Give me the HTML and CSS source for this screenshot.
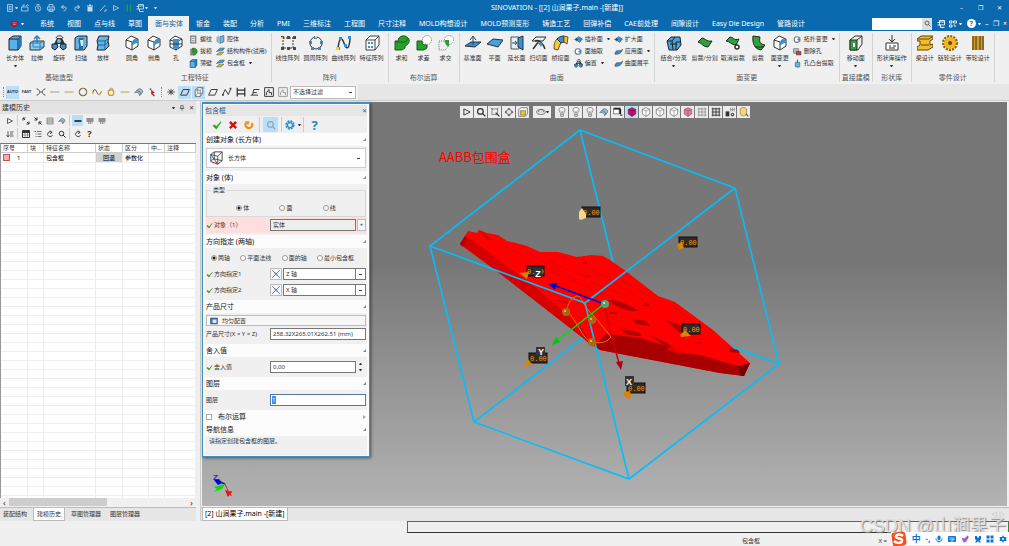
FILE: index.html
```html
<!DOCTYPE html>
<html lang="zh-CN">
<head>
    <meta charset="UTF-8">
    <meta name="viewport" content="width=device-width, initial-scale=1.0">
    <title>SINOVATION</title>
    <link rel="stylesheet" href="styles.css">
</head>
<body>
<svg class="sprite" aria-hidden="true">
    <!-- solids -->
    <symbol id="cube" viewBox="0 0 16 16"><path d="M2 4 6 1h8v10l-3 4H2z" fill="#5bb2ea" stroke="#222"/><path d="M2 4h9v11M11 4l3-3" fill="none" stroke="#222"/><path d="M11 4l3-3v10l-3 4z" fill="#2577b8"/></symbol>
    <symbol id="extrude" viewBox="0 0 16 16"><path d="M1 8l3-2h11v6l-4 3H1z" fill="#8ccdf2" stroke="#333"/><path d="M1 8h10v7M11 8l4-2M4 6v6h11" fill="none" stroke="#2f7fb8"/><path d="M8 8V2M5 4l3-3 3 3" fill="none" stroke="#2f7fb8" stroke-width="1.5"/></symbol>
    <symbol id="revolve" viewBox="0 0 16 16"><path d="M6 3h5l3 6H3z" fill="#333"/><path d="M1 9h5l1 3-3 3-3-2zM10 9h5v4l-3 2-3-3z" fill="#398fd0" stroke="#222"/><path d="M5 3c1-3 6-3 7 0" fill="none" stroke="#222"/><circle cx="8" cy="6" r="2" fill="#6bbcf0"/></symbol>
    <symbol id="sweep" viewBox="0 0 16 16"><path d="M2 3l3-2h9v10l-3 4H2z" fill="#64b5e9" stroke="#222"/><path d="M6 3c-2 4 2 7-1 12h4c3-5-1-8 2-12z" fill="#1f6ca8"/><path d="M7 5h3v6H8z" fill="#d8eefa"/></symbol>
    <symbol id="loft" viewBox="0 0 16 16"><path d="M4 1h10l-1 5 1 5-4 4H2l1-5-1-4z" fill="#64b5e9" stroke="#222"/><path d="M2 6h8l3-2M3 10h7l3-3M10 6v9" fill="none" stroke="#1f5f96"/></symbol>
    <symbol id="wire" viewBox="0 0 16 16"><path d="M2 5l4-4h8v9l-4 5H2z" fill="#fff" stroke="#333"/><path d="M2 5h8v10M10 5l4-4M6 1v9l-4 5M6 10h8" fill="none" stroke="#555"/></symbol>
    <symbol id="shapebox" viewBox="0 0 16 16"><path d="M2 4l4-3h9v10l-5 4z" fill="#fff" stroke="#333"/><path d="M2 4l8 2v9M10 6l5-5M6 1v8l-4 2M6 9l9 2" fill="none" stroke="#444"/><path d="M2 4v8" stroke="#2a8fd8" stroke-width="1.500"/><path d="M2 12l8 3" stroke="#d33" stroke-width="1.500"/></symbol>
    <symbol id="fillet" viewBox="0 0 16 16"><path d="M2 5l5-4 7 3v7l-6 4-6-3z" fill="#fff" stroke="#333"/><path d="M2 5l6 2v8" fill="none" stroke="#333"/><path d="M8 7c1-2 2-4 6-3v4c-3 0-4 1-6 3z" fill="#398fd0"/></symbol>
    <symbol id="hole" viewBox="0 0 16 16"><path d="M2 5l5-4 7 3v7l-6 4-6-3z" fill="#fff" stroke="#333"/><path d="M2 5l6 2 6-3M8 7v8" fill="none" stroke="#333"/><path d="M5 4h6v9l-3 1-3-1z" fill="#398fd0"/><path d="M2 9h12" stroke="#333"/></symbol>
    <symbol id="join" viewBox="0 0 16 16"><path d="M1 6l4-4h9l1 8-4 5H3z" fill="#4aa0dd" stroke="#222"/><path d="M1 6h5l1 9M6 6l3-4M10 7h5M10 7v8M4 9h7" fill="none" stroke="#222"/></symbol>
    <!-- arrays -->
    <symbol id="linear" viewBox="0 0 16 16"><path d="M3 3h10v10H3z" fill="none" stroke="#333" stroke-dasharray="2 1"/><path d="M1 1h3v3H1zM7 1h3v3H7zM13 1h3v3h-3zM1 12h3v3H1zM7 12h3v3H7zM13 12h3v3h-3z" fill="#4b4b4b"/><path d="M1 2h2v2H1z" fill="#fc3"/></symbol>
    <symbol id="circular" viewBox="0 0 16 16"><circle cx="8" cy="8" r="6" fill="none" stroke="#333"/><path d="M6 1h3v3H6zM1 6h3v3H1zM12 6h3v3h-3zM3 12h3v3H3zM10 12h3v3h-3z" fill="#4a86b0"/><path d="M7 1h2v2H7z" fill="#fc3"/></symbol>
    <symbol id="curvearr" viewBox="0 0 16 16"><path d="M2 14C3 2 6 2 8 8s5 8 6-4" fill="none" stroke="#333" stroke-width="1.5"/><path d="M1 12h3v3H1zM3 2h3v3H3zM12 1h3v3h-3zM8 9h3v3H8z" fill="#398fd0"/><path d="M0 12h3v3H0z" fill="#fc3"/></symbol>
    <symbol id="featarr" viewBox="0 0 16 16"><path d="M2 5l4-4h9v9l-4 5H2z" fill="#fafafa" stroke="#444"/><path d="M2 5h9v10M11 5l4-4" fill="none" stroke="#444"/><path d="M4 7h2v2H4zM7 7h2v2H7zM4 11h2v2H4zM7 11h2v2H7z" fill="#398fd0"/></symbol>
    <!-- boolean -->
    <symbol id="union" viewBox="0 0 16 16"><path d="M1 6h3c0-5 7-7 10-3 3 3 0 7-3 8v2l-3 2H1z" fill="#27a02e" stroke="#165c1c"/><path d="M2 7h6c3 1 5-1 5-3" fill="none" stroke="#165c1c"/></symbol>
    <symbol id="subtract" viewBox="0 0 16 16"><circle cx="11" cy="5" r="4.500" fill="#fff" stroke="#777" stroke-dasharray="1 1"/><path d="M1 6h5c0 4 2 4 5 4v3l-3 2H1z" fill="#27a02e" stroke="#165c1c"/></symbol>
    <symbol id="intersect" viewBox="0 0 16 16"><path d="M1 6h9v6l-3 3H1z" fill="none" stroke="#777" stroke-dasharray="1 1"/><circle cx="11" cy="5" r="4.500" fill="#fff" stroke="#777" stroke-dasharray="1 1"/><path d="M7 5h4v6c-3 0-4-2-4-6z" fill="#27a02e"/></symbol>
    <!-- surfaces -->
    <symbol id="datum" viewBox="0 0 16 16"><path d="M0 11l6-4h10l-6 5z" fill="#398fd0" stroke="#234"/><path d="M8 10V2M5 5l3-4 3 4" fill="none" stroke="#345"/></symbol>
    <symbol id="plane" viewBox="0 0 16 16"><path d="M0 9l6-5 10 1-5 7z" fill="#4aa0dd" stroke="#234"/></symbol>
    <symbol id="extend" viewBox="0 0 16 16"><path d="M2 2h8v12H2z" fill="#e9eef2" stroke="#555"/><path d="M9 3l5-2v14l-5-3z" fill="#398fd0" stroke="#234"/><path d="M3 8h5M6 6l2 2-2 2" fill="none" stroke="#345"/></symbol>
    <symbol id="sweepcut" viewBox="0 0 16 16"><path d="M1 6l4-4h10l-3 4z" fill="#eee" stroke="#333"/><path d="M4 6c4-2 8 2 10 8M2 14l6-8" fill="none" stroke="#333" stroke-width="1.500"/><path d="M6 7l6 1-2 4z" fill="#398fd0"/></symbol>
    <symbol id="bridge" viewBox="0 0 16 16"><path d="M1 14c0-6 1-8 3-10l4 3-3 8z" fill="#f6c93c" stroke="#6d5512"/><path d="M4 4c2-2 4-3 7-3l0 6-3 1z" fill="#398fd0" stroke="#234"/><path d="M11 1l4 1-1 7-3-2z" fill="#f6c93c" stroke="#6d5512"/></symbol>
    <symbol id="green" viewBox="0 0 16 16"><path d="M1 7l4-4c3 0 4 4 10 3l-4 6c-5 0-6-4-10-5z" fill="#2da43a" stroke="#222"/></symbol>
    <symbol id="greenx" viewBox="0 0 16 16"><path d="M1 6l4-4c3 0 4 4 9 2l-3 6c-5 0-6-4-10-4z" fill="#2da43a" stroke="#222"/><circle cx="12" cy="12" r="2" fill="#fff" stroke="#333" stroke-width="1.500"/></symbol>
    <symbol id="greenl" viewBox="0 0 16 16"><path d="M3 1l7 1c-1 5 0 7 5 8l-4 5C5 14 2 9 3 1z" fill="#2da43a" stroke="#222"/><path d="M5 12h9" stroke="#222"/></symbol>
    <symbol id="move" viewBox="0 0 16 16"><path d="M2 5l5-4h7v8l-4 6H2z" fill="#eee" stroke="#333"/><path d="M2 5h7v10H2z" fill="#2da43a" stroke="#333"/><path d="M9 5l5-4" stroke="#333"/><path d="M5 8h2v4H5z" fill="#fff"/></symbol>
    <symbol id="lib" viewBox="0 0 16 16"><path d="M2 8h12v7H2z" fill="#fff" stroke="#333"/><path d="M8 0v6M5 4l3 3 3-3M5 11h2M9 11h3M5 13h6" fill="none" stroke="#333"/></symbol>
    <symbol id="beam" viewBox="0 0 16 16"><path d="M0 4l4-3h12v3l-3 2v4l3-1v3l-5 3H0v-3l3-2V6H0z" fill="#f1bd2b" stroke="#5c470c"/><path d="M1 4h11l3-2M4 10h8" fill="none" stroke="#5c470c"/></symbol>
    <symbol id="gear" viewBox="0 0 16 16"><circle cx="8" cy="8" r="6.500" fill="none" stroke="#8a6508" stroke-width="3" stroke-dasharray="2 1"/><circle cx="8" cy="8" r="6" fill="#f3b71d"/><circle cx="8" cy="8" r="2" fill="#5c470c"/></symbol>
    <symbol id="belt" viewBox="0 0 16 16"><path d="M2 1h12v14H2z" fill="#c99b32"/><path d="M3 1v14M6 1v14M10 1v14M13 1v14" stroke="#4e3b0b"/></symbol>
    <!-- small tools -->
    <symbol id="mini-a" viewBox="0 0 16 16"><path d="M3 2h9v12H3z" fill="#dfe5ea" stroke="#777" stroke-width="2"/><path d="M5 6h5M5 10h5" stroke="#666"/></symbol>
    <symbol id="mini-b" viewBox="0 0 16 16"><path d="M1 4l4-3v14l-4-3z" fill="#9ab"/><path d="M7 3l7-2v11l-7 3z" fill="#74b9e8" stroke="#246"/></symbol>
    <symbol id="mini-c" viewBox="0 0 16 16"><path d="M2 3h5v12H2z" fill="#888"/><path d="M6 2c10-1 12 10 2 13z" fill="#27a02e" stroke="#165c1c"/></symbol>
    <symbol id="mini-d" viewBox="0 0 16 16"><path d="M1 8l6-6h8l-3 4H8z" fill="#4aa0dd" stroke="#246"/><path d="M1 14l5-5h8l-5 5z" fill="#d9b640" stroke="#465"/></symbol>
    <symbol id="mini-e" viewBox="0 0 16 16"><path d="M3 8l5-5 7 4-5 6z" fill="#398fd0" stroke="#234"/><path d="M1 8h6M4 5v6" stroke="#24557e" stroke-width="2"/></symbol>
    <symbol id="mini-f" viewBox="0 0 16 16"><path d="M2 10c3-7 9 0 13-6-1 6-5 9-13 9z" fill="#398fd0" stroke="#234"/></symbol>
    <symbol id="mini-g" viewBox="0 0 16 16"><circle cx="7" cy="8" r="5" fill="#fff" stroke="#778" stroke-width="2"/><path d="M7 8l6-4v8z" fill="#398fd0"/></symbol>
    <symbol id="mini-h" viewBox="0 0 16 16"><path d="M1 3h9v8H1z" fill="#bbb" stroke="#555"/><path d="M6 8h8v6H6z" fill="#b44" stroke="#422"/></symbol>
    <symbol id="mini-i" viewBox="0 0 16 16"><path d="M8 1v14" stroke="#555" stroke-width="2"/><path d="M4 6h8v8H4z" fill="#6bb3e4" stroke="#357"/></symbol>
    <!-- sketch tools -->
    <symbol id="axisx" viewBox="0 0 16 16"><path d="M1 3c4 0 5 5 5 5s-1 5-5 5M15 3c-4 0-5 5-5 5s1 5 5 5M6 8h4" fill="none" stroke="#444" stroke-width="1.500"/></symbol>
    <symbol id="line1" viewBox="0 0 16 16"><path d="M1 8h14" stroke="#999" stroke-width="1.500"/><path d="M1 7h2v2H1z" fill="#f5b921"/></symbol>
    <symbol id="line2" viewBox="0 0 16 16"><path d="M1 8h14" stroke="#999" stroke-width="1.500"/><path d="M7 7h3v3H7z" fill="#f5c842"/></symbol>
    <symbol id="level" viewBox="0 0 16 16"><path d="M1 6h14v4H1z" fill="#345"/></symbol>
    <symbol id="circ" viewBox="0 0 16 16"><circle cx="8" cy="8" r="6" fill="none" stroke="#333" stroke-width="1.500"/><path d="M7 1h2v2H7zM7 13h2v2H7zM1 7h2v2H1zM13 7h2v2h-2z" fill="#f5b921"/></symbol>
    <symbol id="wave" viewBox="0 0 16 16"><path d="M1 9c3-9 6-3 7 0s5 5 7-2" fill="none" stroke="#444" stroke-width="1.500"/><path d="M0 8h3v3H0zM11 10h3v3h-3z" fill="#f5b921"/></symbol>
    <symbol id="tri" viewBox="0 0 16 16"><circle cx="8" cy="9" r="4.500" fill="none" stroke="#d39b17" stroke-width="2"/><path d="M5 6l2-4h3l2 4" fill="none" stroke="#777"/></symbol>
    <symbol id="surf" viewBox="0 0 16 16"><path d="M1 9l6-6c4-1 7 2 7 5l-5 6c0-4-3-6-8-5z" fill="#9dbfcf" stroke="#555"/><path d="M4 6c5 0 7 3 7 6" fill="none" stroke="#555"/></symbol>
    <symbol id="pick" viewBox="0 0 16 16"><path d="M5 4l6 5-3 1 3 4-2 1-3-4-1 2z" fill="#c22"/><path d="M3 2h2v3H3z" fill="#555"/></symbol>
    <symbol id="star" viewBox="0 0 16 16"><path d="M2 8h12M4 4l8 8M12 4l-8 8M8 3v10" stroke="#444" stroke-width="1.500"/></symbol>
    <symbol id="para" viewBox="0 0 16 16"><path d="M1 13l4-9h10l-4 9z" fill="none" stroke="#333" stroke-width="1.500"/></symbol>
    <symbol id="base" viewBox="0 0 16 16"><path d="M15 4H6l-2 9H1M4 13h9M5 9h6" fill="none" stroke="#333" stroke-width="1.500"/></symbol>
    <symbol id="poly" viewBox="0 0 16 16"><path d="M1 13l4-9 5 8 4-9" fill="none" stroke="#333" stroke-width="1.500"/><path d="M0 11h3v3H0zM12 1h3v3h-3z" fill="#444"/></symbol>
    <symbol id="dim" viewBox="0 0 16 16"><path d="M2 1v14M14 1v14M2 5h12M2 11h12" stroke="#333" stroke-width="2" fill="none"/></symbol>
    <symbol id="frame" viewBox="0 0 16 16"><path d="M1 1h14v14H1zM4 13V9l4-5v5h4v4" fill="none" stroke="currentColor" stroke-width="1.500"/></symbol>
    <!-- history panel -->
    <symbol id="play" viewBox="0 0 16 16"><path d="M3 3l10 5-10 5z" fill="none" stroke="#333" stroke-width="1.500"/></symbol>
    <symbol id="expand" viewBox="0 0 16 16"><path d="M2 7V2h5M2 2l4 4M14 9v5H9M14 14l-4-4" fill="none" stroke="#333" stroke-width="2"/></symbol>
    <symbol id="collapse" viewBox="0 0 16 16"><path d="M6 1v5H1M6 6L1 1M10 15v-5h5M10 10l5 5" fill="none" stroke="#333" stroke-width="2"/></symbol>
    <symbol id="list" viewBox="0 0 16 16"><path d="M2 2h12v12H2zM2 6h12M2 10h12" fill="#ddd" stroke="#777" stroke-width="1.500"/></symbol>
    <symbol id="bars" viewBox="0 0 16 16"><path d="M1 4h14M1 8h14" stroke="#333" stroke-width="2"/><path d="M4 12h9" stroke="#555" stroke-width="2" stroke-dasharray="3 1"/></symbol>
    <symbol id="sort" viewBox="0 0 16 16"><path d="M4 2v11M1 10l3 4 3-4M8 4h7M8 8h6M8 12h7" fill="none" stroke="#333" stroke-width="1.500"/></symbol>
    <symbol id="grid" viewBox="0 0 16 16"><path d="M1 1h14v14H1z" fill="#fff" stroke="#333" stroke-width="2"/><path d="M1 4h14" stroke="#333" stroke-width="4"/><path d="M6 4v11M11 4v11M1 10h14" stroke="#333"/></symbol>
    <symbol id="tree" viewBox="0 0 16 16"><path d="M1 3h3M6 3h9M3 8h2M7 8h8M3 13h2M7 13h8" stroke="#444" stroke-width="1.500"/></symbol>
    <symbol id="refresh" viewBox="0 0 16 16"><path d="M12 5a5 5 0 1 0 1 5M8 1l4 4-4 2" fill="none" stroke="#333" stroke-width="1.800"/></symbol>
    <symbol id="search" viewBox="0 0 16 16"><circle cx="7" cy="7" r="4.500" fill="none" stroke="currentColor" stroke-width="2"/><path d="M10 10l5 5" stroke="currentColor" stroke-width="2"/></symbol>
    <!-- title bar -->
    <symbol id="doc" viewBox="0 0 16 16"><path d="M3 1h10v14H3zM5 5h6M5 8h6M5 11h6" fill="none" stroke="currentColor" stroke-width="1.500"/></symbol>
    <symbol id="open" viewBox="0 0 16 16"><path d="M1 6h13v8H1zM4 6V2h4M10 4l3-3 2 3" fill="none" stroke="currentColor" stroke-width="1.500"/></symbol>
    <symbol id="save" viewBox="0 0 16 16"><circle cx="8" cy="9" r="5.500" fill="none" stroke="currentColor" stroke-width="1.500"/><path d="M5 1h6M8 5v5h3" fill="none" stroke="currentColor" stroke-width="1.500"/></symbol>
    <symbol id="print" viewBox="0 0 16 16"><path d="M4 6V1h8v5M1 6h14v6H1zM4 10h8v5H4z" fill="none" stroke="currentColor" stroke-width="1.500"/></symbol>
    <symbol id="undo" viewBox="0 0 16 16"><path d="M7 2L3 6l4 4M3 6h7c4 1 3 7-3 8" fill="none" stroke="currentColor" stroke-width="1.800"/></symbol>
    <symbol id="redo" viewBox="0 0 16 16"><path d="M9 2l4 4-4 4M13 6H6c-4 1-3 7 3 8" fill="none" stroke="currentColor" stroke-width="1.800"/></symbol>
    <symbol id="trash" viewBox="0 0 16 16"><path d="M2 3h12v2H2zM6 1h4v2H6zM3 6h10v9H3z" fill="currentColor"/></symbol>
    <symbol id="pen" viewBox="0 0 16 16"><path d="M2 14L13 2M10 14h4v-4" fill="none" stroke="currentColor" stroke-width="1.500"/></symbol>
    <symbol id="arrow" viewBox="0 0 16 16"><path d="M3 3l10 5-10 5z" fill="none" stroke="currentColor" stroke-width="1.500"/></symbol>
    <symbol id="pair" viewBox="0 0 16 16"><path d="M3 1h3v14H3zM10 1h3v14h-3z" fill="#1c9c4c"/></symbol>
    <symbol id="windows" viewBox="0 0 16 16"><path d="M5 1h10v9H5zM1 5h4M1 10h6v5h8M5 4h10" fill="none" stroke="currentColor" stroke-width="1.800"/></symbol>
    <symbol id="layout" viewBox="0 0 16 16"><path d="M1 2h5v4H1zM9 2h6v4H9zM1 10h5v4H1zM9 10h3v4" fill="none" stroke="currentColor" stroke-width="1.800"/></symbol>
    <!-- view bar -->
    <symbol id="fit" viewBox="0 0 16 16"><path d="M3 3h9v9H3zM1 1l4 4M14 1l-3 3" fill="none" stroke="#555"/><path d="M9 9l6 6" stroke="#333" stroke-width="2"/></symbol>
    <symbol id="pan" viewBox="0 0 16 16"><path d="M8 1l3 3H5zM8 15l3-3H5zM1 8l3-3v6zM15 8l-3-3v6z" fill="#555"/><circle cx="8" cy="8" r="4" fill="none" stroke="#555"/></symbol>
    <symbol id="ybox" viewBox="0 0 16 16"><path d="M1 4l4-3h10v10l-3 4H1z" fill="#eee" stroke="#555"/><path d="M4 6h8v7H4z" fill="#efc02b" stroke="#765"/></symbol>
    <symbol id="orbit" viewBox="0 0 16 16"><ellipse cx="8" cy="8" rx="7" ry="4" fill="#ddd" stroke="#555"/><path d="M4 8c0-6 8-6 8 0" fill="none" stroke="#555"/></symbol>
    <symbol id="bulb" viewBox="0 0 16 16"><path d="M8 1c7 0 5 6 2 9v5H6v-5C3 7 1 1 8 1z" fill="#f7f7f7" stroke="#555"/><path d="M6 6l2 4 2-4M6 12h4" fill="none" stroke="#666"/></symbol>
    <symbol id="shade" viewBox="0 0 16 16"><path d="M1 3h9v8H1z" fill="#fff" stroke="#444"/><path d="M1 1h11v3H1zM10 3h3v8h-3z" fill="#222"/><path d="M11 13h4" stroke="#444" stroke-width="2"/></symbol>
    <symbol id="hexm" viewBox="0 0 16 16"><path d="M2 4l6-3 6 3v7l-6 4-6-4z" fill="#c4116d" stroke="#7a0843"/><path d="M2 4l6 2 6-2M8 6v9" fill="none" stroke="#7a0843"/></symbol>
    <symbol id="hexw" viewBox="0 0 16 16"><path d="M2 4l6-3 6 3v7l-6 4-6-4z" fill="#fff" stroke="#555"/><path d="M2 4l6 2 6-2M8 6v9" fill="none" stroke="#777"/></symbol>
    <symbol id="hexp" viewBox="0 0 16 16"><path d="M2 4l6-3 6 3v7l-6 4-6-4z" fill="#dc7fae" stroke="#844"/><path d="M2 4l6 2 6-2M8 6v9" fill="none" stroke="#955"/></symbol>
    <symbol id="mesh" viewBox="0 0 16 16"><path d="M1 3h14M1 8h14M1 13h14M3 1v14M8 1v14M13 1v14" stroke="currentColor" stroke-width="1.500"/></symbol>
    <symbol id="meshset" viewBox="0 0 16 16"><path d="M1 7h6v8H1z" fill="#333"/><path d="M9 1v6M12 1v6M15 1v6M9 4h6" stroke="#777"/><circle cx="12" cy="12" r="2" fill="none" stroke="#555" stroke-width="2"/></symbol>
    <symbol id="cyl" viewBox="0 0 16 16"><path d="M2 3c3-3 8-3 10 0v9c-3 3-7 3-10 0z" fill="#f6d675" stroke="#8a7436"/><path d="M11 11l4 4" stroke="#555" stroke-width="2"/></symbol>
    <!-- dialog -->
    <symbol id="check" viewBox="0 0 16 16"><path d="M1 9l3-2 3 3 7-8 1 1-8 12z" fill="currentColor"/></symbol>
    <symbol id="cross" viewBox="0 0 16 16"><path d="M3 3l10 10M13 3L3 13" stroke="currentColor" stroke-width="4"/></symbol>
    <symbol id="reset" viewBox="0 0 16 16"><path d="M3 4c-2 6 1 9 5 9s7-4 4-8" fill="none" stroke="#f08c1a" stroke-width="3.500"/><path d="M1 2h8L7 8z" fill="#f08c1a"/></symbol>
    <symbol id="cog" viewBox="0 0 16 16"><circle cx="8" cy="8" r="5.500" fill="none" stroke="#2a92d4" stroke-width="4" stroke-dasharray="3 1.300"/><circle cx="8" cy="8" r="4" fill="none" stroke="#2a92d4" stroke-width="2"/></symbol>
    <symbol id="vec" viewBox="0 0 16 16"><path d="M2 14L14 2M2 2l12 12" stroke="#447" stroke-width="1.200"/><path d="M6 6l4 4" stroke="#49d" stroke-width="2"/></symbol>
    <symbol id="disk" viewBox="0 0 16 16"><path d="M1 2h14v12H1z" fill="#3b6cab" stroke="#26466f"/><path d="M5 5h8v7H5z" fill="#dbe8f5"/></symbol>
</svg>

<div class="app">
    <header class="titlebar">
        <div class="quick">
            <button aria-label="新建"><svg><use href="#doc"/></svg><i class="caret"></i></button>
            <button aria-label="打开"><svg><use href="#open"/></svg></button>
            <button aria-label="保存"><svg><use href="#save"/></svg></button>
            <button aria-label="打印"><svg><use href="#print"/></svg></button>
            <button aria-label="撤销"><svg><use href="#undo"/></svg></button>
            <button aria-label="重做"><svg><use href="#redo"/></svg></button>
            <button aria-label="删除"><svg><use href="#trash"/></svg></button>
            <button aria-label="编辑"><svg><use href="#pen"/></svg></button>
            <button aria-label="执行"><svg><use href="#arrow"/></svg></button>
            <button aria-label="暂停"><svg><use href="#pair"/></svg></button>
            <button aria-label="窗口"><svg><use href="#windows"/></svg><i class="caret"></i></button>
            <button aria-label="更多"><i class="caret"></i></button>
        </div>
        <h1>SINOVATION - [[2] 山涧果子.main -[新建]]</h1>
        <div class="winbtns"><button aria-label="最小化">–</button><button aria-label="还原">❐</button><button aria-label="关闭">✕</button></div>
    </header>

    <div class="tabrow">
        <button class="logo" aria-label="菜单"><svg viewBox="0 0 16 12"><path d="M1 1h13l1 4-4 6H5L1 7z" fill="#b5102c"/><path d="M4 4h8M5 7h6" stroke="#f1c7ce"/></svg><i class="caret"></i></button>
        <nav class="tabs">
            <a href="#">系统</a><a href="#">视图</a><a href="#">点与线</a><a href="#">草图</a><a href="#" class="active">面与实体</a><a href="#">钣金</a><a href="#">装配</a><a href="#">分析</a><a href="#">PMI</a><a href="#">三维标注</a><a href="#">工程图</a><a href="#">尺寸注释</a><a href="#">MOLD构想设计</a><a href="#">MOLD预测变形</a><a href="#">铸造工艺</a><a href="#">回弹补偿</a><a href="#">CAE前处理</a><a href="#">间隙设计</a><a href="#">Easy Die Design</a><a href="#">管路设计</a>
        </nav>
        <form class="find"><input type="text" aria-label="搜索"><button type="button" aria-label="查找"><svg><use href="#search"/></svg></button></form>
        <div class="helpers">
            <button aria-label="窗口"><svg><use href="#windows"/></svg></button>
            <button aria-label="布局"><svg><use href="#layout"/></svg><i class="caret"></i></button>
            <button aria-label="帮助"><b class="round">?</b><i class="caret"></i></button>
            <button aria-label="最小化文档">–</button><button aria-label="还原文档">❐</button><button aria-label="关闭文档">×</button>
        </div>
    </div>

    <div class="ribbon">
        <section class="group first">
            <div class="tools">
                <button class="big"><svg><use href="#cube"/></svg>长方体<i class="caret"></i></button>
                <button class="big"><svg><use href="#extrude"/></svg>拉伸</button>
                <button class="big"><svg><use href="#revolve"/></svg>旋转</button>
                <button class="big"><svg><use href="#sweep"/></svg>扫描</button>
                <button class="big"><svg><use href="#loft"/></svg>放样</button>
            </div>
            <h2>基础造型</h2>
        </section>
        <section class="group">
            <div class="tools">
                <button class="big"><svg><use href="#fillet"/></svg>圆角</button>
                <button class="big"><svg><use href="#fillet"/></svg>倒角</button>
                <button class="big"><svg><use href="#hole"/></svg>孔</button>
                <div class="stack">
                    <button><svg><use href="#mini-a"/></svg>螺纹</button>
                    <button><svg><use href="#mini-c"/></svg>拔模</button>
                    <button><svg><use href="#cube"/></svg>薄壁</button>
                </div>
                <div class="stack">
                    <button><svg><use href="#mini-b"/></svg>腔体</button>
                    <button><svg><use href="#mini-d"/></svg>结构构件(试用)</button>
                    <button><svg><use href="#mini-d"/></svg>包含框<i class="caret"></i></button>
                </div>
            </div>
            <h2>工程特征</h2>
        </section>
        <section class="group">
            <div class="tools">
                <button class="big wide"><svg><use href="#linear"/></svg>线性阵列</button>
                <button class="big wide"><svg><use href="#circular"/></svg>圆周阵列</button>
                <button class="big wide"><svg><use href="#curvearr"/></svg>曲线阵列</button>
                <button class="big wide"><svg><use href="#featarr"/></svg>特征阵列</button>
            </div>
            <h2>阵列</h2>
        </section>
        <section class="group">
            <div class="tools">
                <button class="big"><svg><use href="#union"/></svg>求和</button>
                <button class="big"><svg><use href="#subtract"/></svg>求差</button>
                <button class="big"><svg><use href="#intersect"/></svg>求交</button>
            </div>
            <h2>布尔运算</h2>
        </section>
        <section class="group">
            <div class="tools">
                <button class="big"><svg><use href="#datum"/></svg>基准面</button>
                <button class="big"><svg><use href="#plane"/></svg>平面</button>
                <button class="big"><svg><use href="#extend"/></svg>延长面</button>
                <button class="big"><svg><use href="#sweepcut"/></svg>扫切面</button>
                <button class="big"><svg><use href="#bridge"/></svg>桥接面</button>
                <div class="stack">
                    <button><svg><use href="#mini-e"/></svg>插补面<i class="caret"></i></button>
                    <button><svg><use href="#mini-g"/></svg>面抽取</button>
                    <button><svg><use href="#revolve"/></svg>偏置<i class="caret"></i></button>
                </div>
                <div class="stack">
                    <button><svg><use href="#mini-e"/></svg>扩大面</button>
                    <button><svg><use href="#mini-f"/></svg>应用面<i class="caret"></i></button>
                    <button><svg><use href="#mini-f"/></svg>曲面展平</button>
                </div>
            </div>
            <h2>曲面</h2>
        </section>
        <section class="group">
            <div class="tools">
                <button class="big widest"><svg><use href="#join"/></svg>结合/分离<i class="caret"></i></button>
                <button class="big wide"><svg><use href="#green"/></svg>剪裁/分割</button>
                <button class="big wide"><svg><use href="#greenx"/></svg>取消剪裁</button>
                <button class="big"><svg><use href="#greenl"/></svg>剪裁</button>
                <button class="big"><svg><use href="#fillet"/></svg>面变更<i class="caret"></i></button>
                <div class="stack">
                    <button><svg><use href="#mini-g"/></svg>拓扑变更<i class="caret"></i></button>
                    <button><svg><use href="#mini-h"/></svg>删除孔</button>
                    <button><svg><use href="#mini-i"/></svg>孔凸台提取</button>
                </div>
            </div>
            <h2>面变更</h2>
        </section>
        <section class="group">
            <div class="tools"><button class="big wide"><svg><use href="#move"/></svg>移动面<i class="caret"></i></button></div>
            <h2>直接建模</h2>
        </section>
        <section class="group">
            <div class="tools"><button class="big widest"><svg><use href="#lib"/></svg>形状库操作<i class="caret"></i></button></div>
            <h2>形状库</h2>
        </section>
        <section class="group">
            <div class="tools">
                <button class="big"><svg><use href="#beam"/></svg>梁设计</button>
                <button class="big wide"><svg><use href="#gear"/></svg>链轮设计</button>
                <button class="big wide"><svg><use href="#belt"/></svg>带轮设计</button>
            </div>
            <h2>零件设计</h2>
        </section>
    </div>

    <div class="snapbar">
        <div class="snaps">
            <i class="grip"></i>
            <button class="on mode">AUTO</button><button class="mode">FAST</button>
            <button aria-label="交点"><svg><use href="#axisx"/></svg></button>
            <button aria-label="端点"><svg><use href="#line1"/></svg></button>
            <button aria-label="中点"><svg><use href="#line2"/></svg></button>
            <button aria-label="圆心"><svg><use href="#circ"/></svg></button>
            <button aria-label="曲线点"><svg><use href="#wave"/></svg></button>
            <button aria-label="切点"><svg><use href="#tri"/></svg></button>
            <button aria-label="线上点"><svg><use href="#line2"/></svg></button>
            <button aria-label="面上点"><svg><use href="#surf"/></svg></button>
            <button aria-label="拾取"><svg><use href="#pick"/></svg></button>
            <i class="grip"></i>
            <button aria-label="点"><svg><use href="#star"/></svg></button>
            <button class="on" aria-label="面"><svg><use href="#para"/></svg></button>
            <button class="on" aria-label="体"><svg><use href="#wire"/></svg></button>
            <button aria-label="平面"><svg><use href="#para"/></svg></button>
            <button aria-label="折线"><svg><use href="#poly"/></svg></button>
            <button aria-label="尺寸"><svg><use href="#dim"/></svg></button>
            <button aria-label="基准"><svg><use href="#base"/></svg></button>
            <button aria-label="框选"><svg><use href="#frame"/></svg></button>
            <button class="dim" aria-label="多边形选"><svg><use href="#frame"/></svg></button>
            <select aria-label="过滤"><option>不选择过滤</option></select>
        </div>
    </div>

    <main class="work">
        <aside class="history">
            <div class="panelhead"><h2>建模历史</h2><button aria-label="菜单"><i class="caret"></i></button><button aria-label="固定"><svg viewBox="0 0 16 16"><path d="M5 1h6v8H5zM2 9h12M8 9v6" fill="none" stroke="#555" stroke-width="2"/></svg></button><button aria-label="关闭">✕</button></div>
            <div class="paneltools">
                <button aria-label="运行"><svg><use href="#play"/></svg></button><i class="bar"></i>
                <button aria-label="展开"><svg><use href="#expand"/></svg></button>
                <button aria-label="折叠"><svg><use href="#collapse"/></svg></button>
                <button aria-label="列表"><svg><use href="#list"/></svg></button>
                <button aria-label="查看"><svg><use href="#surf"/></svg></button><i class="bar"></i>
                <button class="on" aria-label="简略"><svg><use href="#level"/></svg></button>
                <button aria-label="标准"><svg><use href="#bars"/></svg></button>
                <button aria-label="全部"><svg><use href="#bars"/></svg></button>
            </div>
            <div class="paneltools">
                <button aria-label="排序"><svg><use href="#sort"/></svg></button><i class="bar"></i>
                <button aria-label="表格"><svg><use href="#grid"/></svg></button>
                <button aria-label="树"><svg><use href="#tree"/></svg></button>
                <button aria-label="更新"><svg><use href="#refresh"/></svg></button>
                <button aria-label="搜索"><svg><use href="#search"/></svg></button><i class="bar"></i>
                <button aria-label="刷新"><svg><use href="#refresh"/></svg></button>
                <button class="q" aria-label="帮助">?</button>
            </div>
            <div class="tablewrap">
                <table>
                    <colgroup><col class="c-no"><col class="c-block"><col class="c-name"><col class="c-state"><col class="c-kind"><col class="c-mid"><col></colgroup>
                    <thead><tr><th>序号</th><th>块</th><th>特征名称</th><th>状态</th><th>区分</th><th>中...</th><th>注释</th></tr></thead>
                    <tbody>
                        <tr class="row"><td><i class="swatch"></i>1</td><td></td><td>包含框</td><td class="state">回退</td><td>参数化</td><td></td><td></td></tr>
                        <tr class="blank"><td></td><td></td><td></td><td></td><td></td><td></td><td></td></tr>
                    </tbody>
                </table>
            </div>
            <div class="scroll"><button aria-label="左">‹</button><div class="track"><i></i></div><button aria-label="右">›</button></div>
            <nav class="paneltabs"><a href="#">装配结构</a><a href="#" class="active">建模历史</a><a href="#">草图管理器</a><a href="#">图层管理器</a></nav>
        </aside>

        <section class="document">
            <div class="viewport">
                <svg class="scene" viewBox="202 102 805 404" preserveAspectRatio="xMinYMin meet">
                    <text class="note" x="439" y="162">AABB包围盒</text>
                    <!-- hidden edges -->
                    <path class="edge" stroke-width="1.600" d="M580 130L624 306M624 306L779 364M624 306L474 422"/>
                    <!-- body -->
                    <path fill="#f00" d="M460 244L468 231 477 233 479 230 487 233 498 235 507 241 516 243 527 246 540 252 558 252 577 257 592 255 603 256 610 260 623 269 658 296 675 302 713 330 750 363 744 376 720 373 600 350 583 338 498 272z"/>
                    <path fill="#d60000" d="M460 244L465 236 474 241 503 263 540 291 562 311 581 327 593 347 583 338 498 272z"/>
                    <path fill="#a80000" d="M594 346L606 334 616 335 640 338 669 347 676 352 684 353 700 355 738 366 750 363 744 376 720 373 600 350z"/>
                    <path fill="#700" d="M738 366L750 363 744 376 741 376z"/>
                    <path fill="#b00000" d="M460 244L465 236 467 241 463 247zM479 230L493 241 487 239zM608 300c12 0 22 5 30 11-10 1-22-4-30-11zM665 320l20 7 12 8-18-3zM632 319l14 2 4 5-14-2zM650 335l17 8 14 9-15-5zM620 329l18 3 4 4-14-1zM553 300l12 1 5 3zM728 348l10 2 2 3-10-1z"/>
                    <path fill="none" stroke="#ea0000" d="M503 246l56 29 60 25M527 252l50 28M548 260l40 18M590 268l54 33M590 282l40 15M622 280l50 30M600 320l30 10M680 312l38 27M570 318l50 16"/>
                    <path fill="#c00000" d="M562 257h3v1h-3zM583 262h4v2h-4zM586 275h4v2h-4zM644 303h5v3h-5zM695 342h7v2h-7zM610 312h8v2h-8z"/>
                    <path fill="#e80000" d="M666 350l7-5-4 0 14 7-2 2z"/>
                    <!-- front edges of the bounding box -->
                    <path class="edge" stroke-width="1.600" d="M580 130L735 188 779 364 629 479 474 422 430 246zM430 246L585 303 735 188M585 303L629 479"/>
                    <!-- manipulator -->
                    <path fill="none" stroke="#e87500" d="M567 311c0-9 7-15 11-15s4 10 16 20l17 21c-5 7-13 6-20 5-10-5-11-17-24-31z"/>
                    <path stroke="#0000d0" stroke-width="1.500" d="M604 304L556 286"/><path fill="#0000c8" d="M548 284l9-1-2 7z"/>
                    <path stroke="#00e000" stroke-width="1.500" d="M604 304L558 340"/><path fill="#00c80a" d="M552 345l4-8 4 5z"/>
                    <path fill="none" stroke="#d00000" stroke-width="1.500" d="M604 304l8 34 7 25"/><path fill="#b50012" d="M621 370l-5-8 7-1z"/>
                    <g fill="#a46a12"><circle cx="566" cy="312" r="4"/><circle cx="592" cy="320" r="4"/><circle cx="592" cy="342" r="4"/></g>
                    <g fill="#f0c87a"><circle cx="565" cy="311" r="1"/><circle cx="591" cy="319" r="1"/><circle cx="591" cy="341" r="1"/></g>
                    <circle cx="605" cy="304" r="4" fill="#4da578"/><circle cx="604" cy="303" r="1" fill="#d3f3e1"/>
                    <!-- offset handles -->
                    <g class="tag"><rect x="582" y="207" width="18" height="10"/><text x="583" y="215">0.00</text></g>
                    <g class="tag"><rect x="679" y="237" width="18" height="10"/><text x="680" y="245">0.00</text></g>
                    <g class="tag"><rect x="527" y="266" width="17" height="10"/><text x="527" y="274">0.00</text></g>
                    <g class="tag"><rect x="682" y="324" width="18" height="10"/><text x="683" y="332">0.00</text></g>
                    <g class="tag"><rect x="529" y="353" width="18" height="10"/><text x="530" y="361">0.00</text></g>
                    <g class="tag"><rect x="627" y="383" width="18" height="10"/><text x="628" y="391">0.00</text></g>
                    <path fill="#f3d98c" d="M579 219v-7l3-4 4 6v4l-5 2z"/>
                    <path fill="#d78409" d="M677 244l5-2 2 6-5 2zM519 273l10-1-2 7zM680 335l5-5 6 6-10 1zM523 367l5-8 4 5zM624 392l6-1 1 5-2 5-2-4-3-1z"/>
                    <g class="axis"><rect x="534" y="269" width="8" height="9"/><text x="538" y="277">Z</text></g>
                    <g class="axis"><rect x="536" y="347" width="9" height="8"/><text x="541" y="355">Y</text></g>
                    <g class="axis"><rect x="625" y="376" width="9" height="10"/><text x="629" y="385">X</text></g>
                    <!-- view triad -->
                    <path stroke="#1a1ac8" stroke-width="1.500" d="M225 484l-7-3"/><path fill="#00c" d="M214 480l5-1 3 4-4 2z"/>
                    <path fill="#0d0" d="M225 484l-11 3 3 2-3 3 8-3z"/><path stroke="#d22" d="M225 484l4 9"/><path fill="#e11" d="M225 490l7 2-4 5z"/>
                    <text x="213" y="480" class="triad-z">Z</text><text x="227" y="496" class="triad-x">X</text>
                </svg>

                <div class="viewbar">
                    <button aria-label="选择"><svg><use href="#play"/></svg></button>
                    <button aria-label="放大"><svg><use href="#search"/></svg></button>
                    <button aria-label="窗口缩放"><svg><use href="#fit"/></svg></button>
                    <button aria-label="适合"><svg><use href="#pan"/></svg></button>
                    <button aria-label="视向"><svg><use href="#ybox"/></svg></button>
                    <button class="drop" aria-label="旋转"><svg><use href="#orbit"/></svg><i class="caret"></i></button>
                    <button aria-label="显示"><svg><use href="#bulb"/></svg></button>
                    <button aria-label="隐藏"><svg><use href="#bulb"/></svg></button>
                    <button aria-label="反转"><svg><use href="#bulb"/></svg></button>
                    <button aria-label="全部"><svg><use href="#surf"/></svg></button>
                    <button aria-label="剖切"><svg><use href="#shade"/></svg></button>
                    <button class="on" aria-label="着色"><svg><use href="#hexm"/></svg></button>
                    <button aria-label="线框"><svg><use href="#hexw"/></svg></button>
                    <button aria-label="隐藏线"><svg><use href="#hexw"/></svg></button>
                    <button aria-label="虚线"><svg><use href="#hexw"/></svg></button>
                    <button aria-label="半透明"><svg><use href="#hexp"/></svg></button>
                    <button class="light" aria-label="网格"><svg><use href="#mesh"/></svg></button>
                    <button aria-label="密网格"><svg><use href="#mesh"/></svg></button>
                    <button aria-label="网格设置"><svg><use href="#meshset"/></svg></button>
                    <button aria-label="材质"><svg><use href="#cyl"/></svg></button>
                </div>

                <form class="dialog">
                    <div class="dlgtitle"><h2>包含框</h2><button type="button" aria-label="关闭">✕</button></div>
                    <div class="dlgtools">
                        <button type="button" class="ok" aria-label="确定"><svg><use href="#check"/></svg></button>
                        <button type="button" class="no" aria-label="取消"><svg><use href="#cross"/></svg></button>
                        <button type="button" aria-label="重置"><svg><use href="#reset"/></svg></button><i class="bar"></i>
                        <button type="button" class="on look" aria-label="预览"><svg><use href="#search"/></svg></button><i class="bar"></i>
                        <button type="button" aria-label="设置"><svg><use href="#cog"/></svg><i class="caret"></i></button><i class="bar"></i>
                        <button type="button" class="help" aria-label="帮助">?</button>
                    </div>
                    <h3>创建对象 (长方体)<i class="fold"></i></h3>
                    <div class="part">
                        <div class="shape"><svg><use href="#shapebox"/></svg><select aria-label="形状"><option>长方体</option></select></div>
                    </div>
                    <h3>对象 (体)<i class="fold"></i></h3>
                    <div class="part">
                        <fieldset><legend>类型</legend>
                            <label><input type="radio" name="kind" checked>体</label>
                            <label><input type="radio" name="kind">面</label>
                            <label><input type="radio" name="kind">线</label>
                        </fieldset>
                        <div class="field need"><label for="target"><svg><use href="#check"/></svg>对象（1）</label><div class="ctl"><input id="target" type="text" value="实体" class="gray"><button type="button" class="plus" aria-label="添加">+</button></div></div>
                    </div>
                    <h3>方向指定 (两轴)<i class="fold"></i></h3>
                    <div class="part">
                        <div class="radios">
                            <label><input type="radio" name="dir" checked>两轴</label>
                            <label><input type="radio" name="dir">平面法线</label>
                            <label><input type="radio" name="dir">面的轴</label>
                            <label><input type="radio" name="dir">最小包含框</label>
                        </div>
                        <div class="field"><label for="dir1"><svg><use href="#check"/></svg>方向指定1</label><div class="ctl"><button type="button" aria-label="方向"><svg><use href="#vec"/></svg></button><select id="dir1"><option>Z 轴</option></select></div></div>
                        <div class="field"><label for="dir2"><svg><use href="#check"/></svg>方向指定2</label><div class="ctl"><button type="button" aria-label="方向"><svg><use href="#vec"/></svg></button><select id="dir2"><option>X 轴</option></select></div></div>
                    </div>
                    <h3>产品尺寸<i class="fold"></i></h3>
                    <div class="part">
                        <button type="button" class="config"><svg><use href="#disk"/></svg>均匀配置</button>
                        <div class="field"><label for="size">产品尺寸(X × Y × Z)</label><div class="ctl"><input id="size" type="text" value="258.32X265.01X262.51 (mm)"></div></div>
                    </div>
                    <h3>舍入值<i class="fold"></i></h3>
                    <div class="part">
                        <div class="field"><label for="round"><svg><use href="#check"/></svg>舍入值</label><div class="ctl"><input id="round" type="text" value="0.00"><span class="spin"><i class="caret up"></i><i class="caret"></i></span></div></div>
                    </div>
                    <h3>图层<i class="fold"></i></h3>
                    <div class="part">
                        <div class="field"><label for="layer">图层</label><div class="ctl edit"><span class="sel">1</span><input id="layer" type="text"></div></div>
                    </div>
                    <h3><label class="tick"><input type="checkbox">布尔运算</label><i class="fold shut"></i></h3>
                    <h3>导航信息<i class="fold"></i></h3>
                    <p>请指定创建包含框的图层。</p>
                </form>
            </div>
            <nav class="doctabs"><a href="#" class="active">[2] 山涧果子.main -[新建]</a><span>◁ ▷</span></nav>
        </section>
    </main>

    <footer class="status">
        <input type="text" class="prompt" aria-label="命令">
        <div class="info"><span>包含框</span><span>X =</span></div>
        <div class="watermark">CSDN @山涧果子</div>
        <div class="ime">
            <svg class="sogou" viewBox="0 0 16 16"><rect x="1" y="1" width="14" height="14" rx="3" fill="#f4511e" transform="rotate(-8 8 8)"/><path d="M12 5c-3-3-8-1-7 1s7 1 6 4-6 2-8 0" fill="none" stroke="#fff" stroke-width="2.500"/></svg>
            <b>中</b><b>·,</b>
            <svg viewBox="0 0 16 16"><rect x="5" y="1" width="6" height="9" rx="3" fill="#0b72d8"/><path d="M2 7c0 8 12 8 12 0M8 12v3" fill="none" stroke="#0b72d8" stroke-width="2"/></svg>
            <svg viewBox="0 0 16 16"><rect x="0" y="2" width="16" height="12" rx="2" fill="#0b72d8"/><path d="M3 6h10M3 9h2M7 9h6M5 12h6" stroke="#fff" stroke-width="1.500"/></svg>
            <svg viewBox="0 0 16 16"><path d="M1 5l6 2 7-6 1 4-5 9-5 1z" fill="#a05be6"/><path d="M9 5l5-4 1 4-3 3z" fill="#f0493b"/></svg>
            <svg viewBox="0 0 16 16"><path d="M2 2h4v3h4V2h4v7l-3 1 3 5h-4l-2-3-2 3H2l3-5-3-1z" fill="#0b72d8"/></svg>
            <svg viewBox="0 0 16 16"><path d="M1 1h6v6H1zM9 1h6v6H9zM1 9h6v6H1zM9 9h6v6H9z" fill="#0b72d8"/></svg>
            <svg viewBox="0 0 16 16"><path d="M8 0l2 4 5 0-1 4 1 4-5 0-2 4-2-4-5 0 1-4-1-4 5 0z" fill="#0b72d8"/><circle cx="8" cy="8" r="2" fill="#fff"/></svg>
        </div>
    </footer>
</div>
</body>
</html>
```
FILE: styles.css
```css
* {
    box-sizing: border-box;
}

body {
    margin: 0;
    font-family: "Noto Sans", "Noto Sans CJK SC", sans-serif;
    font-size: 6px;
    line-height: 8px;
    color: #333;
    background: #f0f0f0;
}

h1, h2, h3, p, fieldset {
    margin: 0;
    padding: 0;
    font-size: 7px;
    font-weight: normal;
}

button, input, select {
    margin: 0;
    padding: 0;
    border: 0;
    background: none;
    font: inherit;
    color: inherit;
    white-space: nowrap;
}

button {
    display: flex;
    align-items: center;
    justify-content: center;
}

a {
    color: inherit;
    text-decoration: none;
    white-space: nowrap;
}

svg {
    display: block;
    flex: none;
    width: 10px;
    height: 10px;
}

.sprite {
    display: none;
}

.caret {
    flex: none;
    border: 1px solid transparent;
    border-top: 2px solid currentColor;
    border-bottom: 0;
    width: 3px;
    height: 2px;
    margin-left: 2px;
}

.on {
    background: #b9dff7;
}

.bar {
    width: 1px;
    align-self: stretch;
    background: #ccc;
}

.app {
    display: flex;
    flex-direction: column;
    height: 100vh;
    overflow: hidden;
}

/* title bar and tabs */
.titlebar, .tabrow {
    display: flex;
    align-items: center;
    background: #0b69b0;
    color: #fff;
}

.titlebar {
    height: 16px;
    display: grid;
    grid-template-columns: 1fr auto 1fr;
    padding-left: 5px;
}

.titlebar h1 {
    white-space: nowrap;
    padding-left: 100px;
}

.quick {
    display: flex;
    color: #c8ddf0;
}

.quick button {
    width: 13px;
}

.quick svg {
    width: 8px;
    height: 8px;
}

.quick .caret {
    margin-left: 1px;
}

.winbtns {
    display: flex;
    justify-content: flex-end;
}

.winbtns button {
    width: 19px;
}

.tabrow {
    height: 15px;
    font-size: 7px;
}

.logo {
    width: 33px;
}

.logo svg {
    width: 9px;
    height: 8px;
}

.tabs {
    display: flex;
    align-self: stretch;
}

.tabs a {
    padding: 0 6px 0 7px;
    line-height: 15px;
}

.tabs .active {
    background: #f0f0f0;
    color: #0b5c9c;
}

.find {
    display: flex;
    width: 60px;
    height: 12px;
    margin-left: auto;
    background: #fff;
}

.find input {
    flex: 1;
    min-width: 0;
}

.find button {
    width: 10px;
    background: #ddd;
    color: #555;
}

.find svg {
    width: 7px;
    height: 7px;
}

.helpers {
    display: flex;
    align-items: center;
    justify-content: space-between;
    width: 70px;
    margin: 0 2px 0 5px;
}

.helpers svg {
    width: 8px;
    height: 8px;
}

.round {
    width: 9px;
    height: 9px;
    border-radius: 50%;
    background: #fff;
    color: #0b69b0;
    line-height: 9px;
}

/* ribbon */
.ribbon {
    display: flex;
    height: 53px;
    padding-top: 2px;
}

.group {
    display: flex;
    flex-direction: column;
    justify-content: space-between;
    height: 49px;
    padding: 0 2px;
    border-right: 1px solid #d4d4d4;
}

.group.first {
    padding: 0 5px 0 4px;
    border: 0;
}

.group h2 {
    text-align: center;
    color: #555;
    white-space: nowrap;
}

.tools {
    display: flex;
    justify-content: center;
    height: 37px;
}

.big {
    flex-direction: column;
    justify-content: flex-start;
    gap: 3px;
    width: 22px;
    padding-top: 2px;
}

.big.wide {
    width: 28px;
}

.big.widest {
    width: 34px;
}

.big svg {
    width: 16px;
    height: 16px;
}

.big .caret {
    margin: 0;
}

.stack {
    display: flex;
    flex-direction: column;
    padding: 0 2px;
}

.stack button {
    justify-content: flex-start;
    gap: 2px;
    height: 12px;
}

.stack svg {
    width: 9px;
    height: 9px;
}

/* snap and selection bar */
.snapbar {
    display: flex;
    height: 17px;
    background: #e6e6e6;
    border-bottom: 1px solid #ccc;
}

.snaps {
    display: flex;
    align-items: center;
    gap: 1px;
    padding: 0 2px;
    background: #f0f0f0;
}

.snaps button {
    width: 13px;
    height: 13px;
}

.snaps .mode {
    font-size: 4px;
    font-weight: bold;
}

.snaps .dim {
    color: #999;
}

.grip {
    width: 1px;
    height: 10px;
    margin: 0 1px;
    border-left: 1px dotted #888;
}

.snaps select {
    width: 66px;
    height: 13px;
    border: 1px solid #bbb;
}

/* work area */
.work {
    display: flex;
    flex: 1;
    min-height: 0;
}

.history {
    display: flex;
    flex-direction: column;
    width: 201px;
    padding-right: 4px;
    border-right: 1px solid #ccc;
}

.panelhead {
    display: flex;
    align-items: center;
    gap: 4px;
    height: 13px;
    padding: 0 2px;
    background: #e3e3e3;
}

.panelhead h2 {
    flex: 1;
}

.panelhead svg {
    width: 6px;
    height: 6px;
}

.paneltools {
    display: flex;
    align-items: center;
    gap: 1px;
    height: 13px;
    padding: 1px 4px;
}

.paneltools button {
    width: 11px;
    height: 11px;
}

.paneltools svg {
    width: 8px;
    height: 8px;
}

.paneltools .bar {
    margin: 0 1px;
}

.paneltools .q {
    font-size: 9px;
    font-weight: bold;
}

.tablewrap {
    flex: 1;
    min-height: 0;
    margin-top: 3px;
    border-top: 1px solid #777;
    border-left: 1px solid #999;
    background: #fff;
}

table {
    width: 100%;
    height: 100%;
    border-collapse: separate;
    border-spacing: 0;
    table-layout: fixed;
}

.c-no { width: 27px; }
.c-block { width: 16px; }
.c-name { width: 52px; }
.c-state { width: 27px; }
.c-kind { width: 26px; }
.c-mid { width: 16px; }

th, td {
    padding: 0 2px;
    border-right: 1px solid #eee;
    font-weight: normal;
    text-align: left;
    white-space: nowrap;
    overflow: hidden;
}

th {
    height: 9px;
    border-color: #ccc;
    border-bottom: 1px solid #ccc;
}

.row td {
    height: 10px;
    color: #000;
    border-bottom: 1px solid #eee;
}

.row .state {
    background: #d2d2d2;
    text-align: center;
}

.blank td {
    background: repeating-linear-gradient(#fff 0 8px, #eee 8px 9px);
}

.swatch {
    display: inline-block;
    width: 7px;
    height: 7px;
    margin-right: 7px;
    border: 1px solid #b55;
    background: #faa;
    vertical-align: middle;
}

.scroll {
    display: flex;
    height: 9px;
}

.scroll button {
    width: 9px;
    font-size: 9px;
}

.track {
    flex: 1;
}

.track i {
    display: block;
    width: 55%;
    height: 8px;
    background: #cdcdcd;
}

.paneltabs, .doctabs {
    display: flex;
    height: 14px;
    background: #e6e6e6;
    border-top: 1px solid #bbb;
    line-height: 12px;
}

.paneltabs a {
    padding: 0 3px;
    margin-right: 3px;
}

.paneltabs .active, .doctabs .active {
    background: #fff;
    border: 1px solid #bbb;
    border-top: 0;
}

.document {
    display: flex;
    flex: 1;
    flex-direction: column;
    min-width: 0;
}

.viewport {
    position: relative;
    flex: 1;
    min-height: 0;
    margin: 1px 2px 1px 1px;
    background: linear-gradient(#777 0%, #777 40%, #b3b3b3 100%);
}

.scene {
    width: 100%;
    height: 100%;
}

.edge {
    fill: none;
    stroke: #00bfff;
}

.note {
    fill: #f00;
    font-size: 13px;
    font-family: "Noto Sans CJK SC", sans-serif;
}

.tag rect {
    fill: #302b26;
    stroke: #111;
}

.tag text {
    fill: #f59a10;
    font: 7px "Liberation Mono", monospace;
}

.axis rect {
    fill: #333;
}

.axis text {
    fill: #fff;
    font: bold 9px "Liberation Sans", sans-serif;
    text-anchor: middle;
}

.triad-z, .triad-x {
    font: bold 8px "Liberation Sans", sans-serif;
}

.triad-z { fill: #22c; }
.triad-x { fill: #e11; }

/* floats over the model */
.viewbar {
    position: absolute;
    top: 4px;
    left: 258px;
    display: flex;
    gap: 1px;
    color: #333;
}

.viewbar button {
    width: 13px;
    height: 12px;
    background: #ececec;
}

.viewbar .drop {
    width: 18px;
    margin: 0 3px;
}

.viewbar .drop .caret {
    margin: 0;
}

.viewbar .on {
    background: #b9dff7;
}

.viewbar .light {
    color: #999;
}

/* floating command dialog */
.dialog {
    position: absolute;
    top: 0;
    left: 0;
    width: 168px;
    padding: 1px 2px;
    border: 1px solid #3f8fc4;
    border-top-width: 2px;
    background: #fcfcfc;
    box-shadow: 1px 1px 3px rgba(0, 0, 0, 0.5);
}

.dlgtitle {
    display: flex;
    justify-content: space-between;
    align-items: center;
    height: 11px;
    background: #e6e6e6;
    color: #245f94;
}

.dlgtools {
    display: flex;
    align-items: center;
    gap: 1px;
    height: 17px;
    padding: 1px 4px;
    background: #efefef;
}

.dlgtools button {
    width: 15px;
    height: 15px;
}

.dlgtools .ok { color: #35a025; }
.dlgtools .no { color: #d80f18; }
.dlgtools .look { color: #8ba8bd; }

.dlgtools .caret {
    margin-left: 3px;
}

.dlgtools .bar {
    margin: 0 2px;
}

.dlgtools .help {
    font-size: 13px;
    font-weight: bold;
    color: #1c86c7;
}

.dialog h3 {
    display: flex;
    align-items: center;
    justify-content: space-between;
    height: 13px;
    padding-left: 1px;
    color: #111;
}

.fold {
    width: 0;
    height: 0;
    margin-right: 1px;
    border-left: 3px solid transparent;
    border-bottom: 3px solid #888;
}

.fold.shut {
    border: 2px solid transparent;
    border-left: 3px solid #aaa;
    border-right: 0;
}

.part {
    padding: 2px 1px;
    background: #f0f0f0;
}

.shape {
    display: flex;
    align-items: center;
    height: 20px;
    padding: 0 2px;
    margin-bottom: 1px;
    border: 1px solid #ccc;
    background: #fff;
}

.shape svg {
    width: 14px;
    height: 14px;
    margin-right: 3px;
}

.shape select {
    flex: 1;
    height: 16px;
}

fieldset {
    display: flex;
    justify-content: space-around;
    height: 31px;
    border: 1px solid #d8d8d8;
    padding: 6px 14px 0;
    font-size: 6px;
}

legend {
    margin-left: -10px;
    padding: 0 2px;
}

.dialog label {
    display: flex;
    align-items: center;
    gap: 1px;
    white-space: nowrap;
}

input[type="radio"] {
    appearance: none;
    width: 6px;
    height: 6px;
    border: 1px solid #999;
    border-radius: 50%;
    background: #fff;
}

input[type="radio"]:checked {
    background: radial-gradient(#222 0 1px, #fff 2px);
}

.radios {
    display: flex;
    align-items: center;
    justify-content: space-between;
    height: 16px;
    padding: 0 12px 0 5px;
}

.field {
    display: grid;
    grid-template-columns: 64px minmax(0, 1fr);
    align-items: center;
    height: 16px;
}

.field label svg {
    width: 7px;
    height: 7px;
    color: #35a025;
}

.need {
    background: #ffdede;
}

.ctl {
    display: flex;
    gap: 1px;
    height: 12px;
}

.ctl input, .ctl select {
    flex: 1;
    width: 0;
    min-width: 0;
    padding: 0 2px;
    border: 1px solid #777;
    background: #fff;
}

.ctl input.gray {
    background: #eee;
}

.ctl button {
    width: 12px;
    border: 1px solid #bbb;
    background: #f6f6f6;
}

.ctl .plus {
    width: 9px;
    color: #1961b5;
    font-weight: bold;
}

.spin {
    display: flex;
    flex-direction: column;
    justify-content: space-around;
    width: 9px;
}

.up {
    transform: rotate(180deg);
}

.config {
    justify-content: flex-start;
    gap: 4px;
    width: 100%;
    height: 11px;
    padding-left: 3px;
    border: 1px solid #bbb;
    background: #f6f6f6;
}

.config svg {
    width: 8px;
    height: 8px;
}

.edit {
    border: 1px solid #579;
    background: #fff;
}

.edit input {
    border: 0;
}

.sel {
    width: 4px;
    margin: 1px;
    background: #3390ff;
    color: #fff;
}

input[type="checkbox"] {
    appearance: none;
    width: 6px;
    height: 6px;
    margin-right: 5px;
    border: 1px solid #aaa;
    background: #fff;
}

.dialog p {
    height: 19px;
    padding: 1px 4px;
    background: #f0f0f0;
    font-size: 6px;
}

.doctabs {
    justify-content: space-between;
    padding-left: 1px;
}

.doctabs a {
    padding: 0 2px;
    font-size: 7px;
    color: #000;
}

.doctabs span {
    margin-right: 4px;
    color: #888;
}

select {
    appearance: none;
}

.snaps select, .shape select {
    background: #fff linear-gradient(#444, #444) no-repeat right 3px center / 3px 1px;
    padding-left: 2px;
}

/* arrow cell split off by a rule */
.ctl select {
    background:
        linear-gradient(#444, #444) no-repeat right 3px center / 3px 1px,
        linear-gradient(#777, #777) no-repeat right 9px center / 1px 100%,
        #fff;
}

/* status line */
.status {
    position: relative;
    height: 25px;
    padding-left: 407px;
}

.prompt {
    display: block;
    width: 100%;
    height: 12px;
    border: 1px solid #3b7d3b;
    border-bottom-color: #333;
}

.info {
    display: flex;
    justify-content: space-between;
    padding: 4px 122px 0 335px;
}

.watermark {
    position: absolute;
    right: 3px;
    bottom: 10px;
    font: 18px/20px "Liberation Sans", "Noto Sans CJK SC", sans-serif;
    color: #ddd;
    text-shadow: 1px 1px 1px #888;
}

.ime {
    position: absolute;
    right: 0;
    bottom: 1px;
    display: flex;
    align-items: center;
    justify-content: space-between;
    width: 118px;
    height: 13px;
    padding-right: 2px;
    background: #fff;
    color: #0b72d8;
    font-size: 9px;
}

.ime svg {
    width: 8px;
    height: 8px;
}

.ime .sogou {
    width: 16px;
    height: 16px;
}
```
